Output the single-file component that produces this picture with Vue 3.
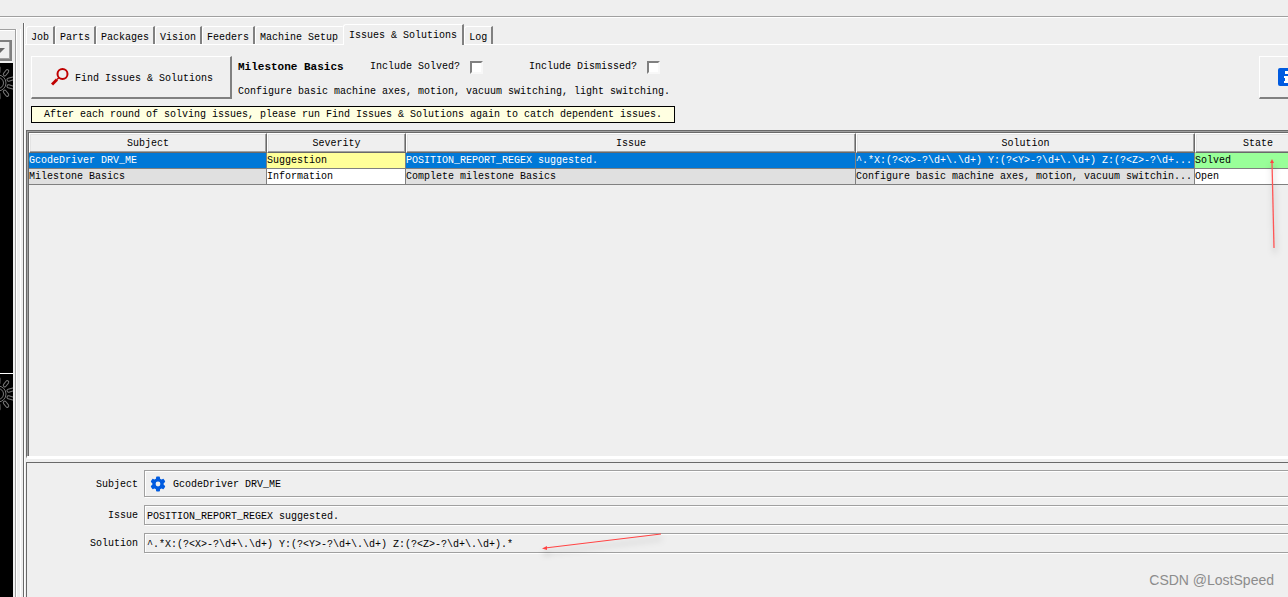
<template>
  <div class="window">
    <div class="top-strip"></div>
    <div class="body">
      <!-- Camera pane -->
      <aside class="camera-pane">
        <div class="camera-select">
          <select aria-label="Camera">
            <option></option>
          </select>
          <svg width="6" height="6" viewBox="0 0 6 6">
            <path d="M0 0H5L0 5z" fill="#696969" />
          </svg>
        </div>
        <div class="camera-views">
          <div v-for="n in 2" :key="n" class="camera-view">
            <svg class="reticle" width="32" height="40" viewBox="-16 -20 32 40">
              <g fill="none" stroke="#777" stroke-width="1">
                <circle r="8" />
                <circle r="5.5" />
                <rect
                  v-for="a in rays"
                  :key="a"
                  x="9.5"
                  y="-1.5"
                  width="7"
                  height="3"
                  rx="1.5"
                  :transform="`rotate(${a})`"
                />
              </g>
            </svg>
          </div>
        </div>
      </aside>

      <main class="main-pane">
        <nav class="tabs">
          <button
            v-for="tab in tabs"
            :key="tab"
            type="button"
            class="tab"
            :class="{ active: tab === activeTab }"
            @click="activeTab = tab"
          >{{ tab }}</button>
        </nav>

        <section class="tab-page">
          <!-- Toolbar -->
          <div class="toolbar">
            <button type="button" class="btn find-btn">
              <svg width="18" height="18" viewBox="0 0 18 18">
                <g fill="none" stroke="#c00000">
                  <circle cx="11.5" cy="6" r="5" stroke-width="2" />
                  <path d="M8 9.500L6 11.500" stroke-width="1.5" />
                  <path d="M6 11.500L1 16.500" stroke-width="3" />
                </g>
              </svg>
              <span>Find Issues &amp; Solutions</span>
            </button>
            <div class="milestone">
              <div class="milestone-row">
                <strong>Milestone Basics</strong>
                <label class="check">Include Solved? <input v-model="includeSolved" type="checkbox"></label>
                <label class="check">Include Dismissed? <input v-model="includeDismissed" type="checkbox"></label>
              </div>
              <div>Configure basic machine axes, motion, vacuum switching, light switching.</div>
            </div>
            <button type="button" class="btn info-btn" aria-label="Info">
              <svg width="18" height="18" viewBox="0 0 18 18">
                <rect width="18" height="18" rx="2" fill="#005be0" />
                <path d="M7 3h4v3H7zM6 8h5v5h1v2H6v-2h1v-3H6z" fill="#fff" />
              </svg>
            </button>
          </div>
          <div class="notice">After each round of solving issues, please run Find Issues &amp; Solutions again to catch dependent issues.</div>

          <!-- Issues table -->
          <div class="table-panel">
            <table>
              <colgroup>
                <col class="col-subject">
                <col class="col-severity">
                <col>
                <col class="col-solution">
                <col class="col-state">
              </colgroup>
              <thead>
                <tr>
                  <th v-for="h in headers" :key="h">{{ h }}</th>
                </tr>
              </thead>
              <tbody>
                <tr
                  v-for="(row, idx) in issues"
                  :key="row.subject"
                  :class="{ selected: idx === selected }"
                  @click="selected = idx"
                >
                  <td>{{ row.subject }}</td>
                  <td :class="row.severity.toLowerCase()">{{ row.severity }}</td>
                  <td>{{ row.issue }}</td>
                  <td>{{ shorten(row.solution) }}</td>
                  <td :class="row.state.toLowerCase()">{{ row.state }}</td>
                </tr>
              </tbody>
            </table>
          </div>

          <!-- Details -->
          <form class="details" @submit.prevent>
            <label for="subject">Subject</label>
            <div class="field field-subject">
              <svg width="16" height="16" viewBox="-8 -8 16 16">
                <g fill="#005be0">
                  <rect v-for="a in [0, 60, 120]" :key="a" x="-2" y="-7.5" width="4" height="15" rx="1" :transform="`rotate(${a})`" />
                </g>
                <circle r="4" fill="none" stroke="#005be0" stroke-width="3.5" />
                <circle r="2.4" fill="#efefef" />
              </svg>
              <input id="subject" readonly :value="issues[selected].subject">
            </div>
            <label for="issue">Issue</label>
            <div class="field">
              <input id="issue" readonly :value="issues[selected].issue">
            </div>
            <label for="solution">Solution</label>
            <div class="field">
              <input id="solution" readonly :value="issues[selected].solution">
            </div>
          </form>
        </section>
      </main>
    </div>

    <!-- Annotations -->
    <svg class="arrow arrow-state" width="16" height="100" viewBox="0 0 16 100">
      <path d="M6 6L8 92" stroke="#f55" stroke-width="1.3" />
      <path d="M6 3L8 7H4z" fill="#f44" />
    </svg>
    <svg class="arrow arrow-solution" width="130" height="26" viewBox="0 0 130 26">
      <path d="M7 18L123 4" stroke="#f44" stroke-width="1.2" />
      <path d="M4 18.500L9 16v4z" fill="#f44" />
    </svg>
    <div class="watermark">CSDN @LostSpeed</div>
  </div>
</template>

<script setup>
import { ref } from 'vue'

const tabs = ['Job', 'Parts', 'Packages', 'Vision', 'Feeders', 'Machine Setup', 'Issues & Solutions', 'Log']
const activeTab = ref('Issues & Solutions')
const includeSolved = ref(false)
const includeDismissed = ref(false)
const selected = ref(0)

const rays = [-88, -52, -17, 17, 52, 88]
const headers = ['Subject', 'Severity', 'Issue', 'Solution', 'State']
const issues = [
  {
    subject: 'GcodeDriver DRV_ME',
    severity: 'Suggestion',
    issue: 'POSITION_REPORT_REGEX suggested.',
    solution: '^.*X:(?<X>-?\\d+\\.\\d+) Y:(?<Y>-?\\d+\\.\\d+) Z:(?<Z>-?\\d+\\.\\d+).*',
    state: 'Solved'
  },
  {
    subject: 'Milestone Basics',
    severity: 'Information',
    issue: 'Complete milestone Basics',
    solution: 'Configure basic machine axes, motion, vacuum switching, light switching.',
    state: 'Open'
  }
]

// the solution column holds 56 characters
function shorten(text) {
  return text.length > 56 ? text.slice(0, 53) + '...' : text
}
</script>

<style>
body {
  margin: 0;
  background: #efefef;
}
</style>

<style scoped>
.window,
.window button,
.window input,
.window select {
  font-family: "Liberation Mono", monospace;
  font-size: 10px;
  color: #000;
}

.window {
  position: relative;
  display: flex;
  flex-direction: column;
  min-height: 100vh;
  overflow: hidden;
  line-height: 16px;
  background: #efefef;
}

.window * {
  box-sizing: border-box;
}

.top-strip {
  height: 18px;
  border-bottom: 1px solid #fff;
  box-shadow: inset 0 -1px #a0a0a0;
}

.body {
  flex: 1;
  display: flex;
}

.camera-pane {
  width: 16px;
  margin-top: 11px;
  padding: 10px 2px 0 0;
  border-top: 1px solid #a0a0a0;
  border-right: 1px solid #a0a0a0;
  box-shadow: 1px 0 #fff, 4px 0 #efefef, 5px 0 #fff, inset 0 1px #fff;
  display: flex;
  flex-direction: column;
  gap: 2px;
}

.camera-select {
  display: flex;
  align-items: center;
  width: 12px;
  height: 21px;
  border: 2px solid #808080;
  border-left: 0;
  box-shadow: inset -1px -1px #a0a0a0;
}

.camera-select select {
  appearance: none;
  width: 0;
  height: 16px;
  padding: 0;
  border: 0;
  background: transparent;
}

.camera-views {
  flex: 1;
  display: flex;
  flex-direction: column;
  background: #000;
}

.camera-view {
  overflow: hidden;
}

.camera-view:first-child {
  height: 311px;
  border-bottom: 1px solid #fff;
}

.reticle {
  display: block;
  margin-left: -18px;
}

.main-pane {
  flex: 1;
  min-width: 0;
  margin: 5px -33px 0 7px;
  border-left: 1px solid #696969;
  box-shadow: inset 1px 0 #fff;
  display: flex;
  flex-direction: column;
}

.tabs {
  display: flex;
  align-items: flex-end;
  height: 22px;
  padding-left: 2px;
  border-bottom: 1px solid #fff;
}

.tab {
  height: 18px;
  padding: 4px 4px 0;
  border: 1px solid #fff;
  border-right: 2px solid #808080;
  border-bottom: 0;
  border-radius: 3px 0 0 0;
  background: #efefef;
  line-height: 13px;
  white-space: nowrap;
}

.tab:nth-child(6) {
  border-right-color: #efefef;
}

.tab.active {
  height: 21px;
  margin: 0 0 -1px -1px;
  padding: 1px 5px 0;
}

.tab-page {
  flex: 1;
  display: flex;
  flex-direction: column;
  padding: 11px 0 0 2px;
}

.toolbar {
  display: flex;
  padding: 0 6px 0 5px;
}

.btn {
  display: flex;
  align-items: center;
  height: 43px;
  border: 1px solid #fff;
  border-right: 2px solid #808080;
  border-bottom: 2px solid #808080;
  border-radius: 0;
  background: #efefef;
}

.find-btn {
  width: 201px;
  gap: 6px;
  padding: 0 0 0 19px;
}

.find-btn span {
  padding-top: 2px;
}

.info-btn {
  width: 56px;
  margin-left: auto;
  justify-content: center;
}

.milestone {
  padding-left: 6px;
  line-height: 14px;
  white-space: nowrap;
}

.milestone-row {
  display: flex;
  align-items: center;
  height: 22px;
  margin-bottom: 7px;
}

.milestone-row strong {
  width: 132px;
  font-size: 11px;
}

.check {
  display: flex;
  align-items: center;
  gap: 10px;
  margin-right: 46px;
}

.check input {
  appearance: none;
  width: 13px;
  height: 13px;
  margin: 0;
  border: 2px solid;
  border-color: #808080 #f8f8f8 #f8f8f8 #808080;
  background: #fff;
}

.notice {
  align-self: flex-start;
  margin: 7px 0 7px 5px;
  height: 17px;
  padding: 0 12px;
  border: 1px solid #000;
  background: #ffffe1;
  white-space: nowrap;
}

.table-panel {
  flex: 1;
  padding: 2px 0 0 2px;
  border: 1px solid #696969;
  border-right: 0;
  border-bottom: 3px solid #fff;
  box-shadow: inset 1px 1px #a0a0a0, inset 2px 2px #696969;
}

table {
  width: 100%;
  table-layout: fixed;
  border-collapse: separate;
  border-spacing: 0;
}

.col-subject {
  width: 238px;
}

.col-severity {
  width: 139px;
}

.col-solution {
  width: 339px;
}

.col-state {
  width: 126px;
}

th {
  height: 20px;
  padding: 1px 0 0;
  border: 1px solid #fff;
  border-right-color: #696969;
  border-bottom-color: #696969;
  box-shadow: inset -1px -1px #a0a0a0, inset 1px 1px #e3e3e3;
  font-weight: normal;
}

td {
  height: 16px;
  padding: 1px 0 0;
  border-right: 1px solid #808080;
  border-bottom: 1px solid #808080;
  background: #e0e0e0;
  line-height: 14px;
  white-space: nowrap;
}

.selected td {
  background: #0078d7;
  color: #fff;
}

td.information,
td.open {
  background: #fff;
}

.selected td.suggestion {
  background: #ffff99;
  color: #000;
}

.selected td.solved {
  background: #99ff99;
  color: #000;
}

.details {
  display: grid;
  grid-template-columns: 111px 1fr;
  gap: 8px 6px;
  align-items: center;
  align-content: start;
  min-height: 135px;
  margin-top: 3px;
  padding-top: 7px;
  border-top: 1px solid #696969;
  border-left: 1px solid #696969;
}

.details label {
  padding-top: 2px;
  text-align: right;
}

.field {
  display: flex;
  align-items: center;
  height: 20px;
  padding: 0 2px;
  border: 1px solid #a0a0a0;
  box-shadow: 1px 1px #fff, inset 1px 1px #fff;
}

.field-subject {
  height: 27px;
  gap: 7px;
  padding-left: 5px;
}

.field input {
  flex: 1;
  min-width: 0;
  padding: 2px 0 0;
  border: 0;
  background: transparent;
  outline: 0;
}

.arrow {
  position: absolute;
  pointer-events: none;
  filter: drop-shadow(1px 5px 3px rgba(0, 0, 0, 0.3));
}

.arrow-state {
  top: 156px;
  right: 6px;
}

.arrow-solution {
  top: 530px;
  left: 538px;
}

.watermark {
  position: absolute;
  right: 14px;
  bottom: 8px;
  font-family: "Liberation Sans", Arial, sans-serif;
  font-size: 14px;
  line-height: 18px;
  color: #8c8c8c;
}
</style>
